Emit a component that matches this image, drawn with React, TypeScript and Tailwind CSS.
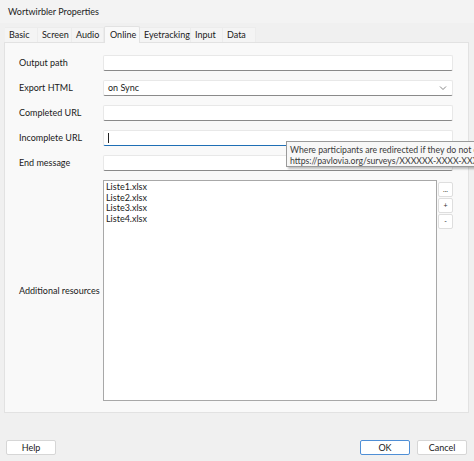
import React from 'react'

const tabs = [
  { name: 'Basic', w: 'w-[33px]' },
  { name: 'Screen', w: 'w-[34px]' },
  { name: 'Audio', w: 'w-[32px]' },
  { name: 'Online', w: 'w-[36px]' },
  { name: 'Eyetracking', w: 'w-[51px]' },
  { name: 'Input', w: 'w-[32px]' },
  { name: 'Data', w: 'w-[33px]' },
]

function TextField({ focused, children }: { focused?: boolean; children?: React.ReactNode }) {
  return (
    <div
      className={`flex-1 h-[16px] bg-white border border-[#e8e8e8] rounded-[2px] flex items-center px-[4px] ${
        focused ? 'border-b-[#1f6fb5] border-b-[1.5px]' : 'border-b-[#8a8a8a]'
      }`}
    >
      {children}
    </div>
  )
}

function Row({ label, children }: { label: string; children: React.ReactNode }) {
  return (
    <div className="flex items-center h-[16px]">
      <div className="w-[84px] text-[#1a1a1a] whitespace-nowrap">{label}</div>
      {children}
    </div>
  )
}

function SmallButton({ label }: { label: string }) {
  return (
    <div className="w-[15px] h-[15px] bg-white border border-[#dedede] rounded-[2px] flex items-center justify-center text-[7px] leading-none text-[#333]">
      {label}
    </div>
  )
}

export default function App() {
  return (
    <div
      className="w-[474px] h-[461px] bg-[#f0f0f0] relative overflow-hidden text-[9px] text-[#1a1a1a] flex flex-col"
      style={{ fontFamily: 'Lato, "Open Sans", sans-serif' }}
    >
      <div className="h-[23px] px-[8px] flex items-center bg-[#f3f3f3] text-[#222]">Wortwirbler Properties</div>

      <div className="flex items-end h-[19px] pl-[5px]">
        {tabs.map((t) =>
          t.name === 'Online' ? (
            <div
              key={t.name}
              className={`${t.w} h-[17px] pl-[5px] flex items-center bg-[#f9f9f9] border border-b-0 border-[#e2e2e2] rounded-t-[2px] -mb-px relative z-10`}
            >
              {t.name}
            </div>
          ) : (
            <div
              key={t.name}
              className={`${t.w} h-[15px] pl-[4px] flex items-center bg-[#f4f4f4] border-r border-t border-[#ececec]`}
            >
              {t.name}
            </div>
          )
        )}
      </div>

      <div className="mx-[4px] mr-[5px] h-[371px] bg-[#f9f9f9] border border-[#e2e2e2] pl-[14px] pr-[15px] pt-[12px] flex flex-col">
        <div className="flex flex-col gap-[9px]">
          <Row label="Output path">
            <TextField />
          </Row>
          <Row label="Export HTML">
            <div className="flex-1 h-[16px] bg-white border border-[#e8e8e8] border-b-[#8a8a8a] rounded-[2px] flex items-center justify-between px-[4px]">
              <span>on Sync</span>
              <svg width="8" height="6" viewBox="0 0 8 6" className="mr-[1px]">
                <path d="M1 1.5 L4 4.5 L7 1.5" fill="none" stroke="#777" strokeWidth="0.9" />
              </svg>
            </div>
          </Row>
          <Row label="Completed URL">
            <TextField />
          </Row>
          <Row label="Incomplete URL">
            <TextField focused>
              <div className="w-px h-[10px] bg-[#222]" />
            </TextField>
          </Row>
          <Row label="End message">
            <TextField />
          </Row>
        </div>

        <div className="flex items-center mt-[9px]">
          <div className="w-[84px] whitespace-nowrap">Additional resources</div>
          <div className="flex-1 flex gap-[1px] items-start">
            <div className="flex-1 h-[221px] bg-white border border-[#a8a8a8] px-[2px] pt-[1px] leading-[10.7px]">
              <div>Liste1.xlsx</div>
              <div>Liste2.xlsx</div>
              <div>Liste3.xlsx</div>
              <div>Liste4.xlsx</div>
            </div>
            <div className="flex flex-col gap-[1px] pt-[2px]">
              <SmallButton label="..." />
              <SmallButton label="+" />
              <SmallButton label="-" />
            </div>
          </div>
        </div>
      </div>

      <div className="flex items-center justify-between px-[6px] mt-[27px]">
        <div className="w-[50px] h-[15px] bg-white border border-[#d6d6d6] rounded-[2px] flex items-center justify-center">
          Help
        </div>
        <div className="flex gap-[7px] pr-[1px]">
          <div className="w-[50px] h-[15px] bg-white border border-[#4f8fd6] rounded-[2px] flex items-center justify-center">
            OK
          </div>
          <div className="w-[50px] h-[15px] bg-white border border-[#d6d6d6] rounded-[2px] flex items-center justify-center">
            Cancel
          </div>
        </div>
      </div>

      <div className="absolute left-[286px] top-[141px] w-[200px] h-[26px] bg-[#f7f7f7] border border-[#9a9a9a] shadow-[2px_2px_2px_rgba(0,0,0,0.25)] px-[3px] py-[2px] text-[8.7px] leading-[11px] text-[#3a3a3a] whitespace-nowrap overflow-hidden">
        <div>Where participants are redirected if they do not complete the task</div>
        <div>https://pavlovia.org/surveys/XXXXXX-XXXX-XXXX-XXXX-XXXXXXXXXXXX</div>
      </div>
    </div>
  )
}
